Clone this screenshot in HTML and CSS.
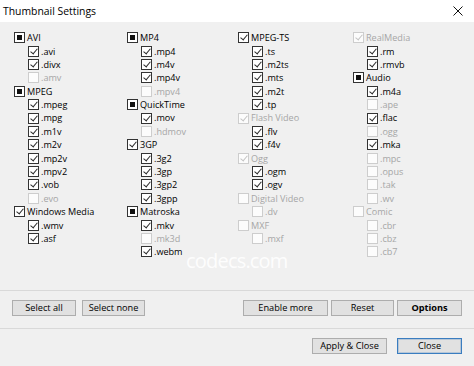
FILE: index.html
```html
<!DOCTYPE html>
<html>
<head>
<meta charset="utf-8">
<link rel="stylesheet" href="styles.css">
</head>
<body>
<div class="window">
  <div class="titlebar">
    <span class="title">Thumbnail Settings</span>
    <svg class="close-x" width="10" height="10" viewBox="0 0 10 10"><path d="M0.5 0.5 L9.5 9.5 M9.5 0.5 L0.5 9.5" stroke="#111" stroke-width="1" fill="none"/></svg>
  </div>
  <div class="groups">
    <div class="col">
      <div class="item"><span class="cb ind"></span>AVI</div>
      <div class="item child"><span class="cb on"></span>.avi</div>
      <div class="item child"><span class="cb on"></span>.divx</div>
      <div class="item child dis"><span class="cb"></span>.amv</div>
      <div class="item"><span class="cb ind"></span>MPEG</div>
      <div class="item child"><span class="cb on"></span>.mpeg</div>
      <div class="item child"><span class="cb on"></span>.mpg</div>
      <div class="item child"><span class="cb on"></span>.m1v</div>
      <div class="item child"><span class="cb on"></span>.m2v</div>
      <div class="item child"><span class="cb on"></span>.mp2v</div>
      <div class="item child"><span class="cb on"></span>.mpv2</div>
      <div class="item child"><span class="cb on"></span>.vob</div>
      <div class="item child dis"><span class="cb"></span>.evo</div>
      <div class="item"><span class="cb on"></span>Windows Media</div>
      <div class="item child"><span class="cb on"></span>.wmv</div>
      <div class="item child"><span class="cb on"></span>.asf</div>
    </div>
    <div class="col">
      <div class="item"><span class="cb ind"></span>MP4</div>
      <div class="item child"><span class="cb on"></span>.mp4</div>
      <div class="item child"><span class="cb on"></span>.m4v</div>
      <div class="item child"><span class="cb on"></span>.mp4v</div>
      <div class="item child dis"><span class="cb"></span>.mpv4</div>
      <div class="item"><span class="cb ind"></span>QuickTime</div>
      <div class="item child"><span class="cb on"></span>.mov</div>
      <div class="item child dis"><span class="cb"></span>.hdmov</div>
      <div class="item"><span class="cb on"></span>3GP</div>
      <div class="item child"><span class="cb on"></span>.3g2</div>
      <div class="item child"><span class="cb on"></span>.3gp</div>
      <div class="item child"><span class="cb on"></span>.3gp2</div>
      <div class="item child"><span class="cb on"></span>.3gpp</div>
      <div class="item"><span class="cb ind"></span>Matroska</div>
      <div class="item child"><span class="cb on"></span>.mkv</div>
      <div class="item child dis"><span class="cb"></span>.mk3d</div>
      <div class="item child"><span class="cb on"></span>.webm</div>
    </div>
    <div class="col">
      <div class="item"><span class="cb on"></span>MPEG-TS</div>
      <div class="item child"><span class="cb on"></span>.ts</div>
      <div class="item child"><span class="cb on"></span>.m2ts</div>
      <div class="item child"><span class="cb on"></span>.mts</div>
      <div class="item child"><span class="cb on"></span>.m2t</div>
      <div class="item child"><span class="cb on"></span>.tp</div>
      <div class="item dis"><span class="cb on"></span>Flash Video</div>
      <div class="item child"><span class="cb on"></span>.flv</div>
      <div class="item child"><span class="cb on"></span>.f4v</div>
      <div class="item dis"><span class="cb on"></span>Ogg</div>
      <div class="item child"><span class="cb on"></span>.ogm</div>
      <div class="item child"><span class="cb on"></span>.ogv</div>
      <div class="item dis"><span class="cb"></span>Digital Video</div>
      <div class="item child dis"><span class="cb"></span>.dv</div>
      <div class="item dis"><span class="cb"></span>MXF</div>
      <div class="item child dis"><span class="cb"></span>.mxf</div>
    </div>
    <div class="col">
      <div class="item dis"><span class="cb on"></span>RealMedia</div>
      <div class="item child"><span class="cb on"></span>.rm</div>
      <div class="item child"><span class="cb on"></span>.rmvb</div>
      <div class="item"><span class="cb ind"></span>Audio</div>
      <div class="item child"><span class="cb on"></span>.m4a</div>
      <div class="item child dis"><span class="cb"></span>.ape</div>
      <div class="item child"><span class="cb on"></span>.flac</div>
      <div class="item child dis"><span class="cb"></span>.ogg</div>
      <div class="item child"><span class="cb on"></span>.mka</div>
      <div class="item child dis"><span class="cb"></span>.mpc</div>
      <div class="item child dis"><span class="cb"></span>.opus</div>
      <div class="item child dis"><span class="cb"></span>.tak</div>
      <div class="item child dis"><span class="cb"></span>.wv</div>
      <div class="item dis"><span class="cb"></span>Comic</div>
      <div class="item child dis"><span class="cb"></span>.cbr</div>
      <div class="item child dis"><span class="cb"></span>.cbz</div>
      <div class="item child dis"><span class="cb"></span>.cb7</div>
    </div>
    <div class="watermark">codecs.com</div>
  </div>
  <div class="sep"></div>
  <div class="btnrow">
    <div class="btngroup">
      <button class="btn w64">Select all</button>
      <button class="btn w63">Select none</button>
    </div>
    <div class="btngroup tight">
      <button class="btn w85">Enable more</button>
      <button class="btn w63">Reset</button>
      <button class="btn w65 bold">Options</button>
    </div>
  </div>
  <div class="sep"></div>
  <div class="btnrow end">
    <div class="btngroup wide">
      <button class="btn w75">Apply &amp; Close</button>
      <button class="btn w65 default">Close</button>
    </div>
  </div>
</div>
</body>
</html>
```

FILE: styles.css
```css
html, body {
  margin: 0;
  padding: 0;
  background: #f0f0f0;
}

body {
  font-family: "Open Sans", "Noto Sans", sans-serif;
  color: #000;
}

.window {
  width: 474px;
  height: 366px;
  background: #f0f0f0;
  display: flex;
  flex-direction: column;
  overflow: hidden;
}

.titlebar {
  height: 22px;
  flex: none;
  background: #fff;
  display: flex;
  align-items: center;
  justify-content: space-between;
  padding: 0 11px 0 3px;
  box-sizing: border-box;
}

.title {
  font-size: 10.4px;
  line-height: 1;
  color: #000;
}

.close-x {
  display: block;
}

.groups {
  position: relative;
  height: 268px;
  flex: none;
  box-sizing: border-box;
  padding: 9px 0 0 14px;
  display: grid;
  grid-template-columns: 113px 111px 115px 1fr;
  align-content: start;
}

.col {
  display: grid;
  grid-auto-rows: 13.4px;
}

.item {
  display: flex;
  align-items: center;
  gap: 2px;
  font-size: 9.1px;
  line-height: 1;
  white-space: nowrap;
  color: #000;
}

.item.child {
  padding-left: 14px;
}

.item.dis {
  color: #a6a6a6;
}

.cb {
  position: relative;
  width: 11px;
  height: 11px;
  box-sizing: border-box;
  border: 1px solid #333;
  background: #fff;
  flex: none;
}

.dis .cb {
  border-color: #cdcdcd;
  background: #fcfcfc;
}

.cb.on::after {
  content: "";
  position: absolute;
  left: 3px;
  top: 0px;
  width: 3px;
  height: 6px;
  border-right: 1px solid #2a2a2a;
  border-bottom: 1px solid #2a2a2a;
  transform: rotate(40deg);
}

.dis .cb.on::after {
  border-color: #c4c4c4;
}

.cb.ind::after {
  content: "";
  position: absolute;
  left: 2px;
  top: 2px;
  width: 5px;
  height: 5px;
  background: #111;
}

.watermark {
  position: absolute;
  left: 186px;
  top: 229px;
  font-size: 20px;
  letter-spacing: -0.8px;
  color: rgba(255, 255, 255, 0.9);
  line-height: 1;
}

.sep {
  height: 1px;
  flex: none;
  background: #d9d9d9;
}

.btnrow {
  display: flex;
  justify-content: space-between;
  padding: 9px 12px 12px;
  flex: none;
}

.btnrow.end {
  justify-content: flex-end;
}

.btngroup {
  display: flex;
  gap: 6px;
}

.btngroup.tight {
  gap: 3px;
}

.btngroup.wide {
  gap: 10px;
}

.btn {
  height: 16px;
  box-sizing: border-box;
  padding: 0;
  margin: 0;
  background: #e1e1e1;
  border: 1px solid #adadad;
  border-radius: 0;
  font-family: "Open Sans", "Noto Sans", sans-serif;
  font-size: 9.2px;
  line-height: 1;
  color: #000;
}

.btn.bold {
  font-weight: 700;
}

.btn.default {
  border-color: #3a7dc0;
  box-shadow: inset 0 0 0 1px rgba(58, 125, 192, 0.25);
}

.w63 { width: 63px; }
.w64 { width: 64px; }
.w65 { width: 65px; }
.w75 { width: 75px; }
.w85 { width: 85px; }
```
